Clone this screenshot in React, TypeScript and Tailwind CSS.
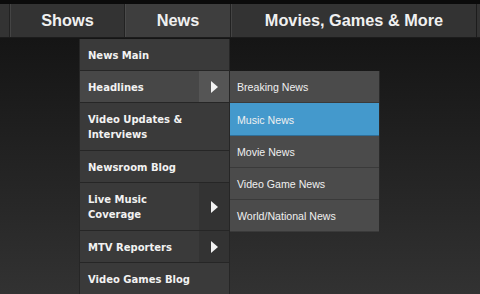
import { ReactNode } from 'react'

type Row = { label: ReactNode; tall?: boolean; arrow?: boolean; active?: boolean }

const rows: Row[] = [
    { label: 'News Main' },
    { label: 'Headlines', arrow: true, active: true },
    { label: <>Video Updates &amp;<br />Interviews</>, tall: true },
    { label: 'Newsroom Blog' },
    { label: <>Live Music<br />Coverage</>, tall: true, arrow: true },
    { label: 'MTV Reporters', arrow: true },
    { label: 'Video Games Blog' },
]

const subRows = ['Breaking News', 'Music News', 'Movie News', 'Video Game News', 'World/National News']

function Arrow() {
    return (
        <svg width="7" height="12" viewBox="0 0 7 12" aria-hidden="true">
            <path d="M0 0 L7 6 L0 12 Z" fill="#f2f2f2" />
        </svg>
    )
}

export default function App() {
    return (
        <div className="relative h-[294px] w-[480px] overflow-hidden bg-gradient-to-b from-[#111111] to-[#323232] font-['Liberation_Sans',Arial,sans-serif]">
            {/* top strip */}
            <div className="h-[4px] bg-[#0b0b0b]" />

            {/* main nav */}
            <nav className="flex h-[34px] border-b border-[#1c1c1c] bg-[#333333] text-[16.3px] font-bold text-[#f0f0f0]">
                <div className="w-[10px] border-r border-[#222222]" />
                <div className="flex w-[115px] items-center justify-center border-l border-[#444444] border-r border-r-[#222222]">Shows</div>
                <div className="flex w-[106px] items-center justify-center border-l border-[#4a4a4a] border-r border-r-[#222222] bg-[#3e3e3e]">News</div>
                <div className="flex w-[246px] items-center justify-center border-l border-[#444444] border-r border-r-[#1c1c1c]">Movies, Games &amp; More</div>
            </nav>

            {/* news dropdown */}
            <div className="absolute left-[79px] top-[39px] w-[151px] border-l border-r border-[#262626] font-['DejaVu_Sans',sans-serif] text-[10px] font-bold leading-[15px] text-[#f2f2f2]">
                {rows.map((r, i) => (
                    <div
                        key={i}
                        className={`relative flex border-b border-[#262626] ${r.tall ? 'h-[48px]' : 'h-[32px]'} ${r.active ? 'bg-[#474747]' : 'bg-[#3a3a3a]'}`}
                    >
                        <div className="flex flex-1 items-center pl-[8px] pt-[1px]">{r.label}</div>
                        {r.arrow && (
                            <div className={`flex w-[30px] items-center justify-center ${r.active ? 'bg-[#555555]' : 'bg-[#333333]'}`}>
                                <Arrow />
                            </div>
                        )}
                    </div>
                ))}
            </div>

            {/* headlines submenu */}
            <div className="absolute left-[230px] top-[71px] w-[150px] border-r border-[#2a2a2a] font-['Liberation_Sans',sans-serif] text-[10.6px] text-[#f0f0f0]">
                {subRows.map((s, i) => (
                    <div
                        key={s}
                        className={`flex h-[32.3px] items-center border-b pl-[7px] pt-[3px] ${i === 1 ? 'border-[#2f6f99] bg-[#4499cc]' : 'border-[#3a3a3a] bg-[#4b4b4b]'}`}
                    >
                        {s}
                    </div>
                ))}
            </div>
        </div>
    )
}
